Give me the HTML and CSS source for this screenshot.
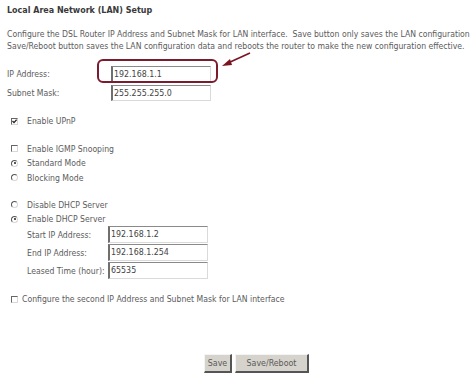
FILE: index.html
```html
<!DOCTYPE html>
<html>
<head>
<meta charset="utf-8">
<link rel="stylesheet" href="styles.css">
</head>
<body>
<div class="page">
  <div class="title">Local Area Network (LAN) Setup</div>
  <div class="desc">
    <div class="line">Configure the DSL Router IP Address and Subnet Mask for LAN interface.&nbsp; Save button only saves the LAN configuration</div>
    <div class="line">Save/Reboot button saves the LAN configuration data and reboots the router to make the new configuration effective.</div>
  </div>

  <div class="ipblock">
    <div class="row row-ip"><span class="lbl lbl-ip">IP Address:</span><span class="field">192.168.1.1</span></div>
    <div class="row row-mask"><span class="lbl lbl-ip">Subnet Mask:</span><span class="field field-mask">255.255.255.0</span></div>
    <div class="highlight"></div>
    <svg class="arrow" width="34" height="20" viewBox="0 0 34 20">
      <line x1="31" y1="2" x2="9" y2="12" stroke="#7a1420" stroke-width="1.6"/>
      <polygon points="3,15 11,8 13,14" fill="#7a1420"/>
    </svg>
  </div>

  <div class="opt opt-upnp">
    <span class="cb"><svg width="5" height="5" viewBox="0 0 5 5"><path d="M0.5 2 L2 3.6 L4.6 0.6" stroke="#222" stroke-width="1.3" fill="none"/></svg></span>
    <span class="otext">Enable UPnP</span>
  </div>

  <div class="opt opt-igmp"><span class="cb"></span><span class="otext">Enable IGMP Snooping</span></div>
  <div class="opt opt-rad"><span class="rb on"></span><span class="otext">Standard Mode</span></div>
  <div class="opt opt-rad"><span class="rb"></span><span class="otext">Blocking Mode</span></div>

  <div class="opt opt-dhcp"><span class="rb"></span><span class="otext">Disable DHCP Server</span></div>
  <div class="opt opt-rad"><span class="rb on"></span><span class="otext">Enable DHCP Server</span></div>

  <div class="dhcp">
    <div class="row row-d"><span class="lbl lbl-d">Start IP Address:</span><span class="field">192.168.1.2</span></div>
    <div class="row row-d"><span class="lbl lbl-d">End IP Address:</span><span class="field">192.168.1.254</span></div>
    <div class="row row-d"><span class="lbl lbl-d">Leased Time (hour):</span><span class="field">65535</span></div>
  </div>

  <div class="opt opt-second"><span class="cb"></span><span class="otext otext-tight">Configure the second IP Address and Subnet Mask for LAN interface</span></div>

  <div class="buttons">
    <span class="btn btn-save">Save</span>
    <span class="btn btn-reboot">Save/Reboot</span>
  </div>
</div>
</body>
</html>
```
FILE: styles.css
```css
html, body {
  margin: 0;
  padding: 0;
  background: #ffffff;
  overflow: hidden;
}
.page {
  width: 474px;
  height: 382px;
  padding: 0 0 0 7px;
  box-sizing: border-box;
  font-family: "DejaVu Sans Condensed", "DejaVu Sans", Verdana, sans-serif;
  font-stretch: semi-condensed;
  font-size: 8.6px;
  color: #5b5b5b;
  position: relative;
  white-space: nowrap;
  overflow: hidden;
}
.title {
  padding-top: 4px;
  font-weight: bold;
  font-size: 8.9px;
  color: #3a3a3a;
  line-height: 12px;
}
.desc {
  margin-top: 12px;
  line-height: 12px;
}
.ipblock {
  position: relative;
  margin-top: 13px;
}
.row {
  display: flex;
  align-items: center;
}
.row-ip { height: 18px; }
.row-mask { height: 16px; margin-top: 2px; }
.lbl-ip { width: 104px; }
.lbl-d { width: 81px; }
.field {
  width: 100px;
  height: 17px;
  box-sizing: border-box;
  border-top: 1px solid #8a8a8a;
  border-left: 2px solid #6f6f6f;
  border-right: 1px solid #dadada;
  border-bottom: 1px solid #dadada;
  padding-left: 1px;
  line-height: 15px;
  color: #444;
  font-size: 8.8px;
}
.field-mask { height: 16px; line-height: 14px; }
.highlight {
  position: absolute;
  left: 90px;
  top: -6px;
  width: 121px;
  height: 24px;
  box-sizing: border-box;
  border: 2px solid #7a1c2e;
  border-radius: 6px;
}
.arrow {
  position: absolute;
  left: 212px;
  top: -14px;
}
.opt {
  display: flex;
  align-items: center;
  height: 14.5px;
}
.opt-upnp { margin-top: 13px; }
.opt-igmp { margin-top: 13px; }
.opt-dhcp { margin-top: 12.5px; }
.opt-second { margin-top: 13px; }
.cb {
  width: 7px;
  height: 7px;
  box-sizing: border-box;
  margin-left: 4px;
  border-top: 1px solid #666;
  border-left: 1px solid #666;
  border-right: 1px solid #d8d8d8;
  border-bottom: 1px solid #d8d8d8;
  background: #fff;
  display: flex;
  align-items: center;
  justify-content: center;
}
.rb {
  width: 7px;
  height: 7px;
  box-sizing: border-box;
  margin-left: 4px;
  border-radius: 50%;
  border: 1px solid;
  border-color: #555 #d6d6d6 #d6d6d6 #555;
  background: #fff;
  position: relative;
}
.rb.on::after {
  content: "";
  position: absolute;
  left: 1.5px;
  top: 1.5px;
  width: 2px;
  height: 2px;
  border-radius: 50%;
  background: #222;
}
.otext { margin-left: 9px; }
.otext-tight { margin-left: 4px; }
.dhcp {
  margin-left: 20px;
  margin-top: -1.5px;
}
.row-d { height: 17px; margin-top: 1px; }
.buttons {
  display: flex;
  gap: 3px;
  margin-left: 197px;
  margin-top: 47px;
}
.btn {
  height: 19px;
  box-sizing: border-box;
  background: #d6d3cc;
  border-top: 1px solid #f4f4f4;
  border-left: 1px solid #f4f4f4;
  border-right: 2px solid #555;
  border-bottom: 2px solid #555;
  display: flex;
  align-items: center;
  justify-content: center;
  color: #5a5a5a;
  font-size: 8.8px;
}
.btn-save { width: 28px; }
.btn-reboot { width: 74px; }
```
